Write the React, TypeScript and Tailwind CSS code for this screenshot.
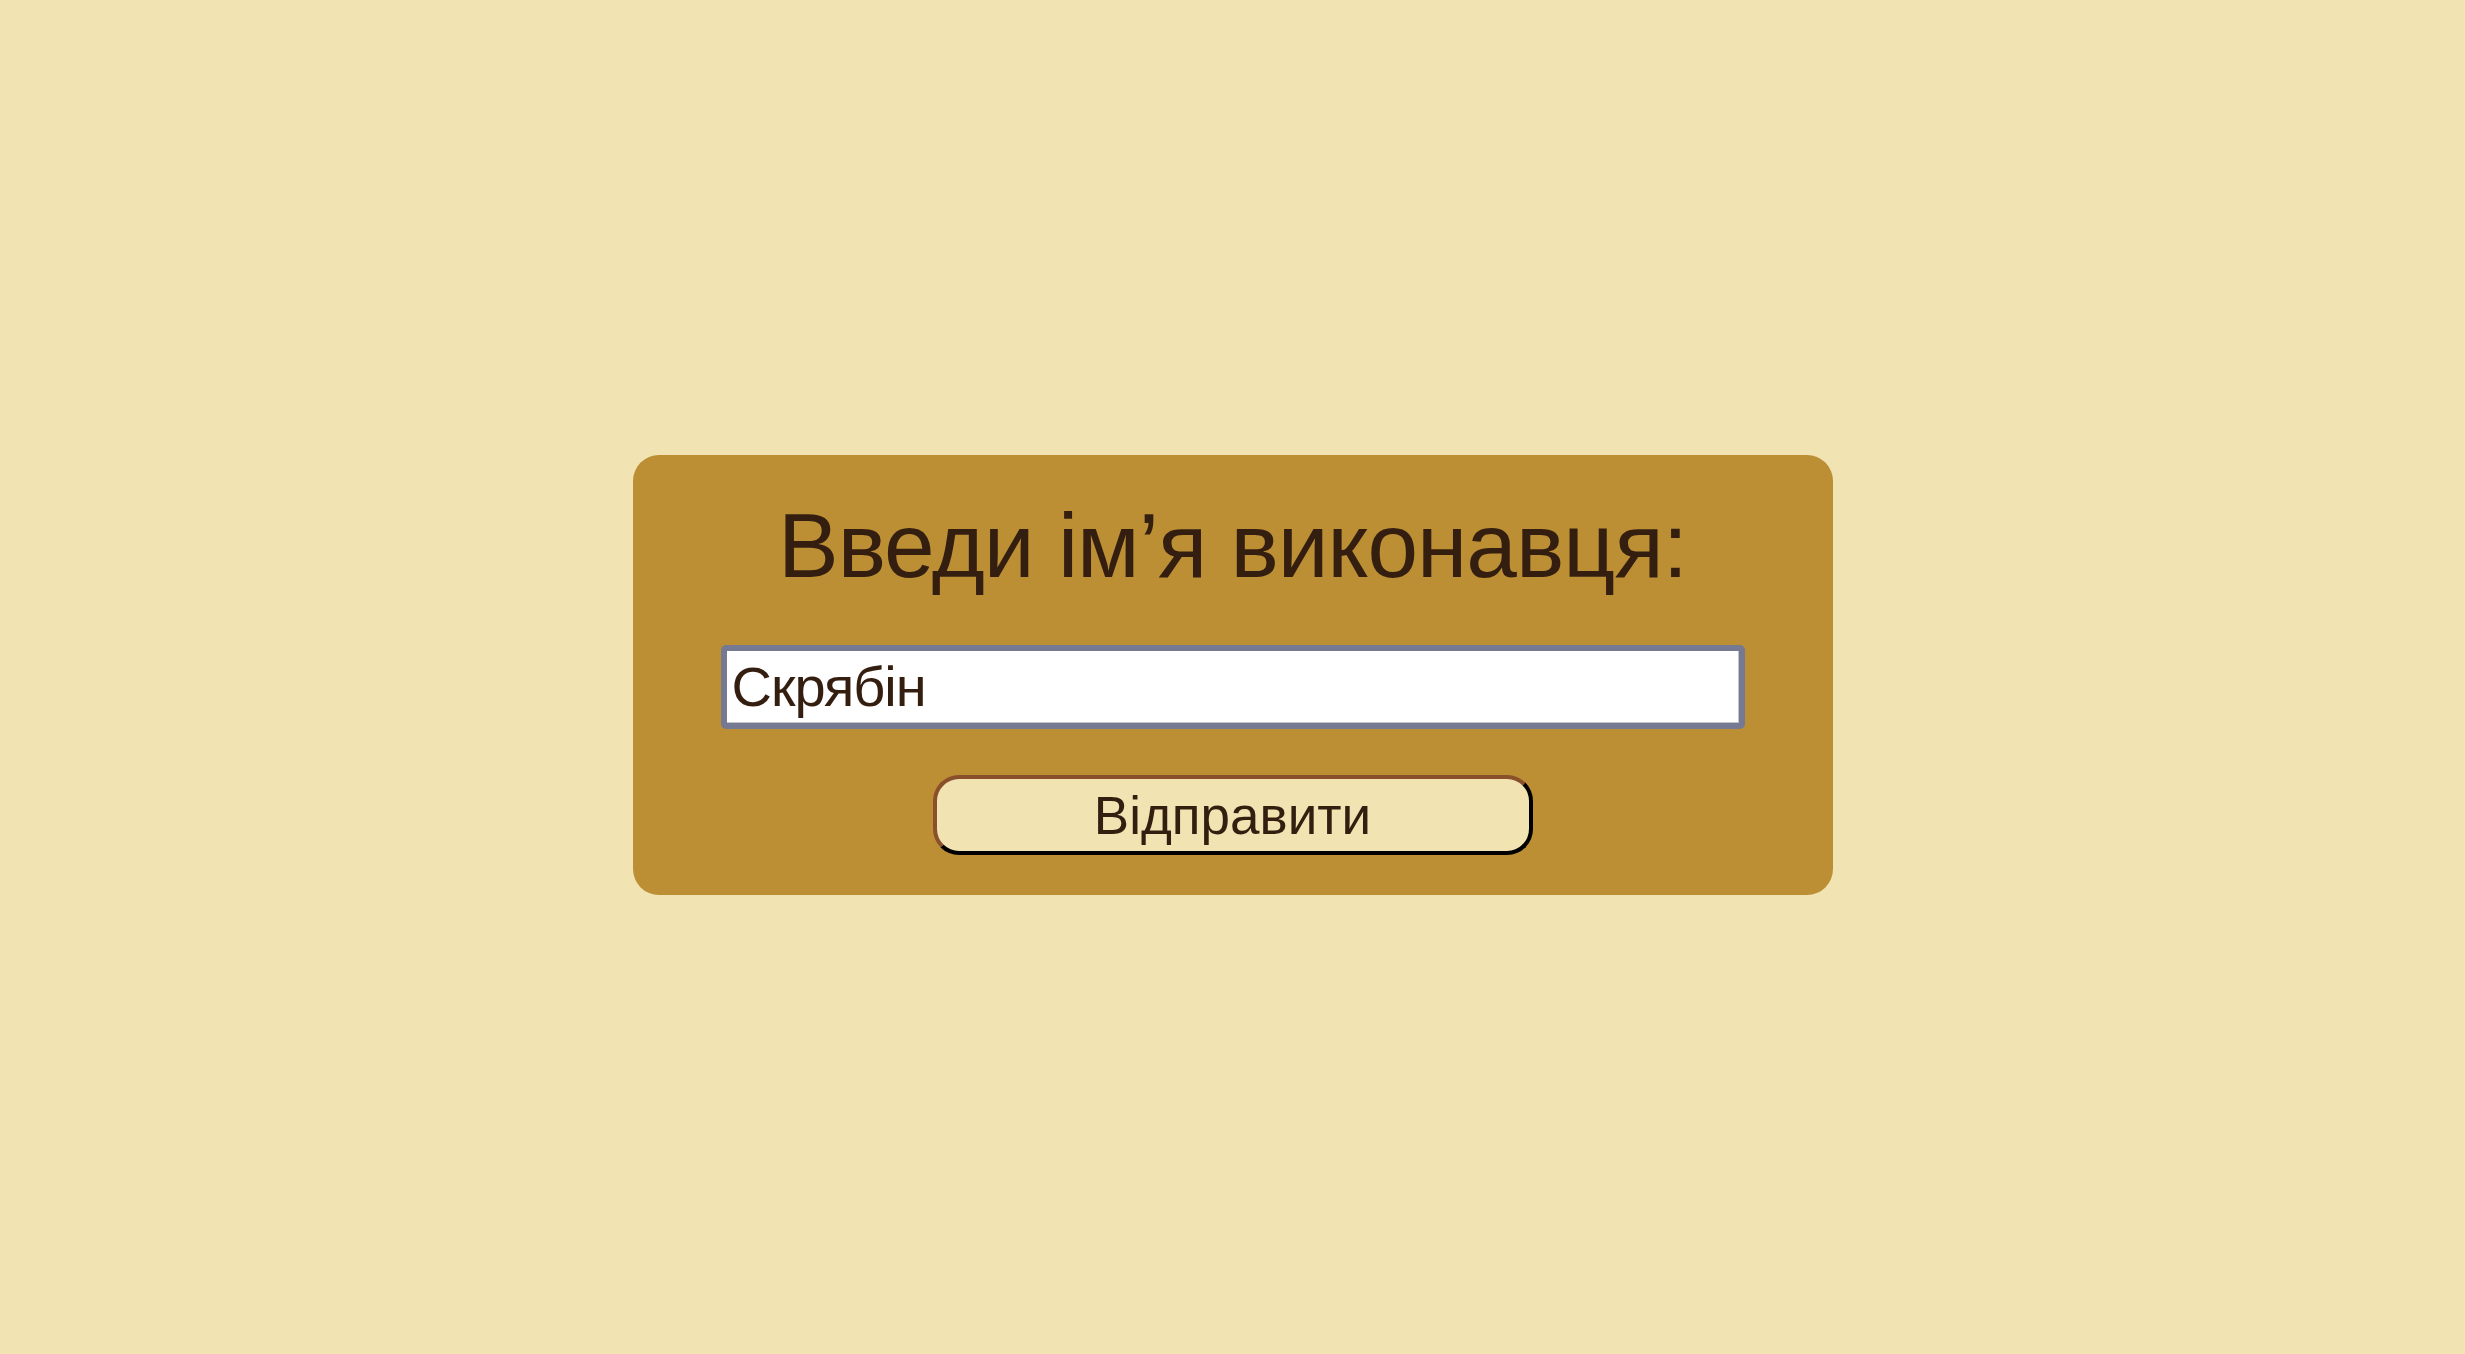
import { useEffect, useRef } from "react";

export default function App() {
  const inputRef = useRef<HTMLInputElement>(null);

  useEffect(() => {
    const el = inputRef.current;
    if (!el) return;
    el.focus();
    const end = el.value.length;
    el.setSelectionRange(end, end);
  }, []);

  return (
    <div className="min-h-screen w-full bg-[#f1e4b2] flex items-center justify-center font-['Liberation_Sans',Arial,sans-serif]">
      <form
        className="mb-[4px] w-[1200px] h-[440px] rounded-[26px] bg-[#bd8f35] flex flex-col items-center pt-[45px]"
        onSubmit={(e) => e.preventDefault()}
      >
        <h1 className="text-[91px] leading-[92px] tracking-[-1px] font-normal text-[#331e10]">
          Введи ім’я виконавця:
        </h1>

        <input
          ref={inputRef}
          type="text"
          defaultValue="Скрябін"
          className="mt-[53px] w-[1024px] h-[84px] border-[6px] border-[#757a92] rounded-[5px] bg-white px-[5px] text-[56px] tracking-[-1px] text-[#331e10] caret-[#331e10] outline-none shadow-[inset_-1px_-1px_0_#c4c4c4]"
        />

        <button
          type="submit"
          className="mt-[46px] w-[600px] h-[80px] rounded-[26px] border-[4px] border-t-[#8a4f2b] border-l-[#8a4f2b] border-r-black border-b-black bg-[#f1e4b2] text-[53px] leading-none text-[#331e10]"
        >
          Відправити
        </button>
      </form>
    </div>
  );
}
